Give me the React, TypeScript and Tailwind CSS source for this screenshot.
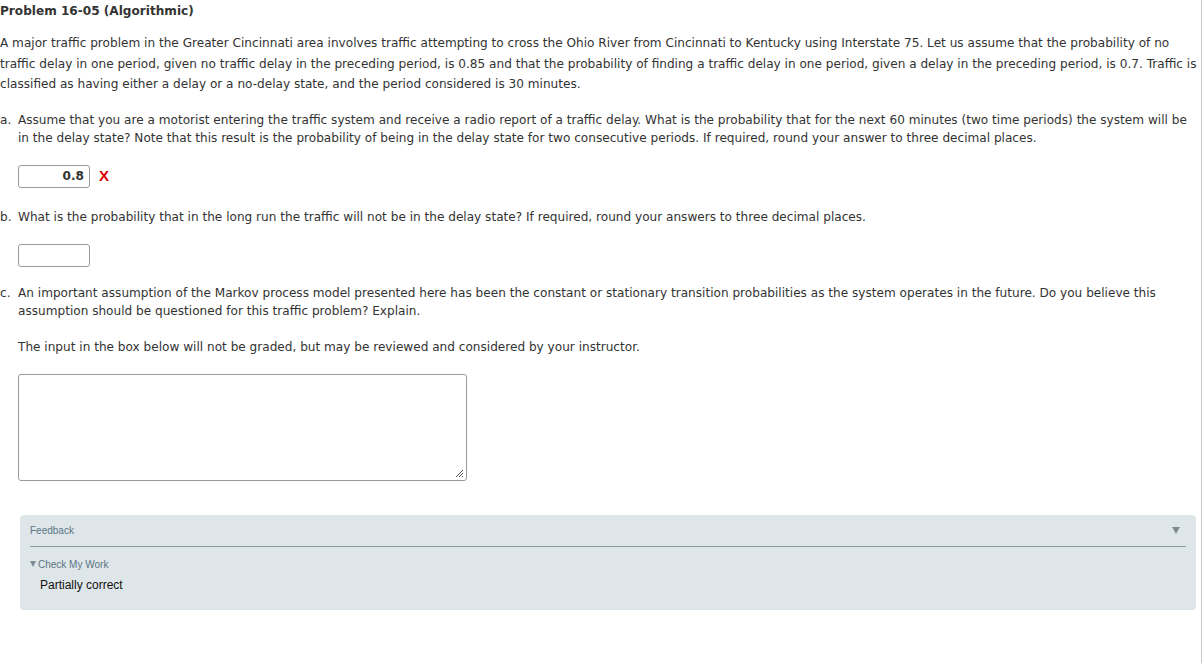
export default function App() {
  return (
    <div className="min-h-[663px] w-[1203px] bg-white font-['DejaVu_Sans',Verdana,sans-serif] text-[12.1px] text-[#333]">
      <div className="mr-px min-h-[663px] border-r border-[#c8c8c8] pr-[3px] pt-[3px]">
        <h1 className="text-[12.1px] font-bold leading-[16px] text-[#333]">Problem 16-05 (Algorithmic)</h1>

        <p className="mt-[14px] leading-[20.5px]">
          A major traffic problem in the Greater Cincinnati area involves traffic attempting to cross the Ohio River from Cincinnati to Kentucky using Interstate 75. Let us assume that the probability of no traffic delay in one period, given no traffic delay in the preceding period, is 0.85 and that the probability of finding a traffic delay in one period, given a delay in the preceding period, is 0.7. Traffic is classified as having either a delay or a no-delay state, and the period considered is 30 minutes.
        </p>

        <div className="mt-[16px] flex leading-[18px]">
          <span className="w-[18px] shrink-0">a.</span>
          <span>
            Assume that you are a motorist entering the traffic system and receive a radio report of a traffic delay. What is the probability that for the next 60 minutes (two time periods) the system will be in the delay state? Note that this result is the probability of being in the delay state for two consecutive periods. If required, round your answer to three decimal places.
          </span>
        </div>

        <div className="ml-[18px] mt-[18px] flex items-center gap-[9px]">
          <div className="flex h-[23px] w-[72px] items-center justify-end rounded-[3px] border border-[#9a9a9a] px-[5px] text-[12.1px] font-bold">
            0.8
          </div>
          <span className="font-['Liberation_Sans',Arial,sans-serif] text-[15px] font-bold text-[#e00000]">X</span>
        </div>

        <div className="mt-[20px] flex leading-[18px]">
          <span className="w-[18px] shrink-0">b.</span>
          <span>What is the probability that in the long run the traffic will not be in the delay state? If required, round your answers to three decimal places.</span>
        </div>

        <div className="ml-[18px] mt-[18px] h-[23px] w-[72px] rounded-[3px] border border-[#9a9a9a]" />

        <div className="mt-[17px] flex leading-[18px]">
          <span className="w-[18px] shrink-0">c.</span>
          <span>
            An important assumption of the Markov process model presented here has been the constant or stationary transition probabilities as the system operates in the future. Do you believe this assumption should be questioned for this traffic problem? Explain.
          </span>
        </div>

        <p className="ml-[18px] mt-[18px] leading-[18px]">
          The input in the box below will not be graded, but may be reviewed and considered by your instructor.
        </p>

        <div className="relative ml-[18px] mt-[18px] h-[107px] w-[449px] rounded-[3px] border border-[#9a9a9a]">
          <svg className="absolute bottom-[2px] right-[2px]" width="9" height="9" viewBox="0 0 9 9">
            <path d="M1 8 L8 1 M4 8 L8 4 M7 8 L8 7" stroke="#555" strokeWidth="1" />
          </svg>
        </div>

        <div className="ml-[20px] mt-[34px] w-[1176px] rounded-[4px] bg-[#dfe6e9] px-[10px] pb-[16px] pt-[8px] font-['Liberation_Sans',Arial,sans-serif]">
          <div className="flex items-center justify-between pb-[8px]">
            <span className="text-[10px] text-[#5b7583]">Feedback</span>
            <svg className="mr-[6px]" width="8" height="7" viewBox="0 0 8 7">
              <path d="M0 0 H8 L4 7 Z" fill="#7d8b93" />
            </svg>
          </div>
          <div className="border-t border-[#8e9ba2]" />
          <div className="mt-[10px] flex items-center text-[10px] text-[#5b7583]">
            <svg className="mr-[2px]" width="6" height="6" viewBox="0 0 6 6">
              <path d="M0 0 H6 L3 6 Z" fill="#7d8b93" />
            </svg>
            Check My Work
          </div>
          <div className="ml-[10px] mt-[4px] text-[12px] text-[#111]">Partially correct</div>
        </div>
      </div>
    </div>
  );
}
